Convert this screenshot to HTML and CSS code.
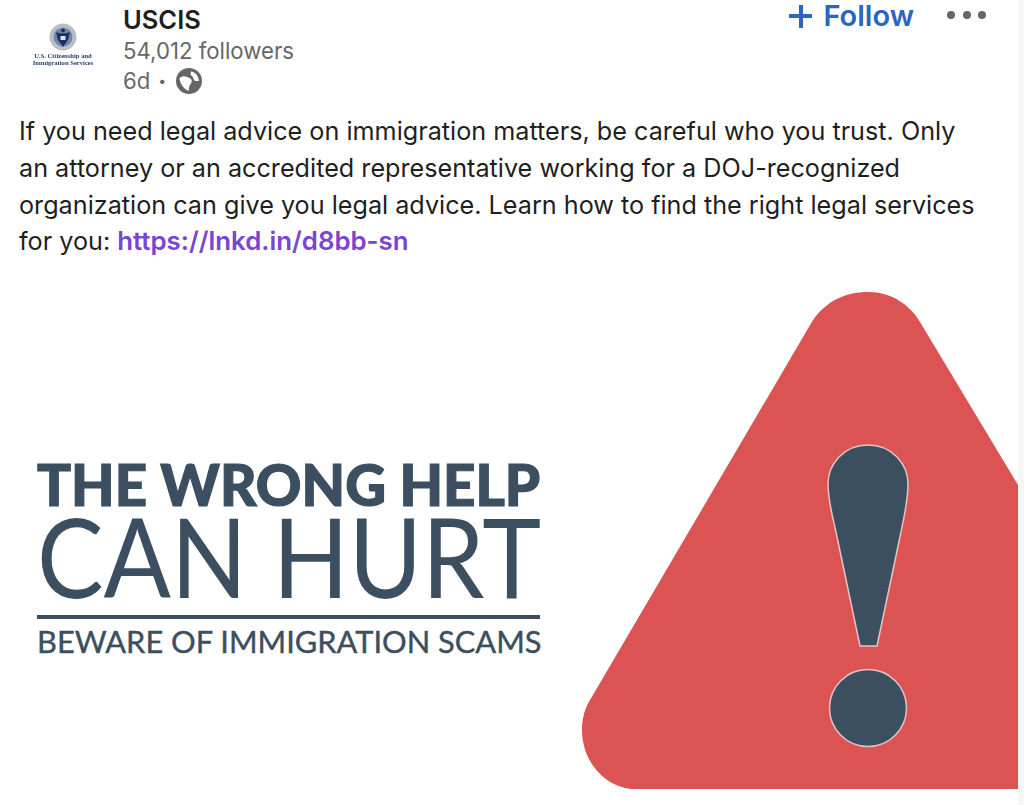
FILE: index.html
```html
<!DOCTYPE html>
<html lang="en">
<head>
<meta charset="utf-8">
<title>USCIS post</title>
<link rel="stylesheet" href="styles.css">
</head>
<body>
<main class="post">
  <header class="head">
    <svg class="logo" viewBox="0 0 76 50" aria-label="USCIS logo">
      <circle cx="38" cy="16" r="13.500" fill="#b9bec6"/>
      <circle cx="38" cy="16" r="9.500" fill="#6f86ad"/>
      <path d="M31 11q7 3 14 0l-2 8q-5 7-5 7t-5-7z" fill="#1c2f63"/>
      <circle cx="38" cy="9.500" r="2" fill="#1c2f63"/>
      <rect x="35.500" y="15" width="5" height="4" fill="#dfe3ea"/>
      <text class="logo-text" x="38" y="37" text-anchor="middle">U.S. Citizenship and</text>
      <text class="logo-text" x="38" y="44" text-anchor="middle">Immigration Services</text>
    </svg>
    <div class="meta">
      <div class="name">USCIS</div>
      <div class="sub">54,012 followers</div>
      <div class="sub when">6d <span class="dot">•</span>
        <svg class="globe" viewBox="0 0 26 26" aria-hidden="true">
          <circle cx="13" cy="13" r="13" fill="#666"/>
          <path d="M3.500 10C7 7 11 8 14.500 10.500C17 13 15 16 13.500 17.500L12.500 23C8 21 4 16 3.500 10ZM15 3.500C19.500 4 22.500 8 23 13L19 13C17 11.500 18 8.500 14.500 7Z" fill="#fff"/>
        </svg>
      </div>
    </div>
    <button class="follow"><span class="plus"></span>Follow</button>
    <div class="more"><i></i><i></i><i></i></div>
  </header>
  <p class="body">If you need legal advice on immigration matters, be careful who you trust. Only an attorney or an accredited representative working for a DOJ-recognized organization can give you legal advice. Learn how to find the right legal services for you: <a class="link" href="#">https://lnkd.in/d8bb-sn</a></p>
  <section class="poster">
    <div class="headline">
      <div class="h1">THE WRONG HELP</div>
      <div class="h2">CAN HURT</div>
      <div class="h3">BEWARE OF IMMIGRATION SCAMS</div>
    </div>
    <svg class="warn" viewBox="0 0 436 527" aria-label="Warning sign">
      <path d="M8 422L231 42C245 22 265 14 286 14C309 14 329 26 341 49L436 207V511H53C25 511 0 485 0 452C0 442 2 432 8 422Z" fill="#dc5353"/>
      <path d="M286 167C310 167 326 186 326 206C326 222 322 240 319 254L295 368H278L254 254C250 236 246 222 246 206C246 186 262 167 286 167Z" fill="#3c4f60" stroke="#e3c4c4" stroke-width="1.500"/>
      <circle cx="286" cy="430" r="38.500" fill="#3c4f60" stroke="#e3c4c4" stroke-width="1.500"/>
    </svg>
  </section>
</main>
</body>
</html>
```
FILE: styles.css
```css
* { box-sizing: border-box; }
html, body { margin: 0; height: 100%; background: #f6f6f6; }
body { overflow: hidden; font-family: Inter, "Liberation Sans", sans-serif; }
.post { width: 1018px; height: 805px; background: #fff; color: #1f1f1f; overflow: hidden; }
.head { display: flex; align-items: flex-start; height: 113px; padding: 0 0 0 25px; }
.logo { width: 76px; height: 50px; flex: none; margin-top: 21px; filter: blur(0.4px); }
.logo-text { font: 700 6.600px "Liberation Serif", serif; fill: #2b4270; }
.meta { margin: 4px 0 0 22px; flex: 1; }
.name { font-size: 25.500px; font-weight: 600; line-height: 32px; }
.sub { font-size: 22.200px; line-height: 30px; color: #666; }
.when { display: flex; align-items: center; gap: 8px; }
.dot { font-size: 14px; }
.globe { width: 26px; height: 26px; margin-left: 2px; }
.follow { display: flex; align-items: center; gap: 11px; margin: 0; padding: 0; height: 32px; background: none; border: 0; color: #2b65c0; font: 600 29px/32px Inter, sans-serif; }
.plus { width: 23px; height: 23px; margin-left: 1px; background: linear-gradient(#2b65c0, #2b65c0) center / 100% 4px no-repeat, linear-gradient(#2b65c0, #2b65c0) center / 4px 100% no-repeat; }
.more { display: flex; gap: 7.500px; margin: 0 32px 0 33px; height: 30px; align-items: center; }
.more i { width: 8px; height: 8px; border-radius: 50%; background: #666; }
.body { margin: 0; padding: 0 30px 0 19px; font-size: 25.200px; line-height: 36.800px; color: #1f1f1f; height: 165px; }
.link { color: #7a45d0; font-size: 25.800px; font-weight: 600; text-decoration: none; }
.poster { display: flex; height: 527px; }
.headline { width: 582px; padding: 183.500px 0 0 37px; color: #3c4f60; font-family: Lato, sans-serif; }
.h1 { font-size: 56.400px; line-height: 45px; font-weight: 900; white-space: nowrap; -webkit-text-stroke: 1.200px #3c4f60; }
.h2 { font-size: 110px; line-height: 96px; font-weight: 400; white-space: nowrap; transform: scaleX(0.906); transform-origin: left center; }
.h3 { width: 503px; margin-top: 12.500px; padding-top: 5px; border-top: 4px solid #3c4f60; font-size: 30.800px; line-height: 36px; font-weight: 400; white-space: nowrap; -webkit-text-stroke: 0.400px #3c4f60; }
.warn { width: 436px; height: 527px; flex: none; }
```
